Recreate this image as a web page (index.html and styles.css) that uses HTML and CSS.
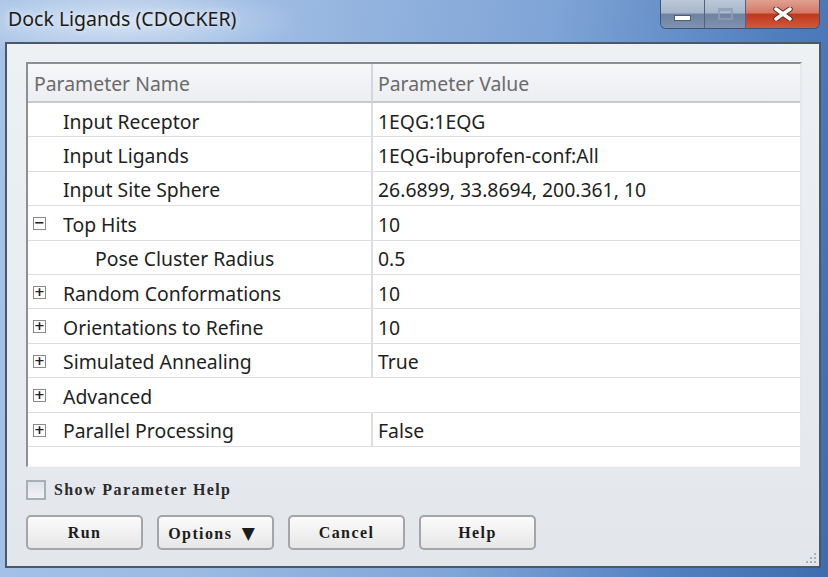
FILE: index.html
```html
<!DOCTYPE html>
<html lang="en">
  <head>
    <meta charset="UTF-8" />
    <title>Dock Ligands (CDOCKER)</title>
    <link rel="stylesheet" href="styles.css">
  </head>
  <body>
    <div class="window">
      <div class="titlebar">
        <div class="title">Dock Ligands (CDOCKER)</div>
        <div class="caption-buttons">
          <div class="cap-btn cap-min"><span class="min-bar"></span></div>
          <div class="cap-btn cap-max"><span class="max-box"></span></div>
          <div class="cap-btn cap-close">
            <svg width="20" height="14" viewBox="0 0 20 14">
              <path d="M3 2 L17 12 M17 2 L3 12" stroke="#5a2a22" stroke-width="5.5" stroke-linecap="round" />
              <path d="M3 2 L17 12 M17 2 L3 12" stroke="#fff" stroke-width="3.5" stroke-linecap="round" />
            </svg>
          </div>
        </div>
      </div>

      <div class="client">
        <div class="grid">
          <div class="head">Parameter Name</div>
          <div class="head head-value">Parameter Value</div>

          <div class="cell name">Input Receptor</div>
          <div class="cell value">1EQG:1EQG</div>

          <div class="cell name">Input Ligands</div>
          <div class="cell value">1EQG-ibuprofen-conf:All</div>

          <div class="cell name">Input Site Sphere</div>
          <div class="cell value">26.6899, 33.8694, 200.361, 10</div>

          <div class="cell name"><span class="toggle">&minus;</span>Top Hits</div>
          <div class="cell value">10</div>

          <div class="cell name child">Pose Cluster Radius</div>
          <div class="cell value">0.5</div>

          <div class="cell name"><span class="toggle">+</span>Random Conformations</div>
          <div class="cell value">10</div>

          <div class="cell name"><span class="toggle">+</span>Orientations to Refine</div>
          <div class="cell value">10</div>

          <div class="cell name"><span class="toggle">+</span>Simulated Annealing</div>
          <div class="cell value">True</div>

          <div class="cell name"><span class="toggle">+</span>Advanced</div>
          <div class="cell value group"></div>

          <div class="cell name"><span class="toggle">+</span>Parallel Processing</div>
          <div class="cell value">False</div>
        </div>

        <label class="help-check">
          <span class="checkbox"></span>
          Show Parameter Help
        </label>

        <div class="buttons">
          <button class="btn">Run</button>
          <button class="btn btn-options">Options <span class="arrow">&#9660;</span></button>
          <button class="btn">Cancel</button>
          <button class="btn">Help</button>
        </div>

        <svg class="grip" width="14" height="14" viewBox="0 0 14 14">
          <rect x="10" y="2" width="2" height="2" fill="#a8b0ba" />
          <rect x="6" y="6" width="2" height="2" fill="#a8b0ba" />
          <rect x="10" y="6" width="2" height="2" fill="#a8b0ba" />
          <rect x="2" y="10" width="2" height="2" fill="#a8b0ba" />
          <rect x="6" y="10" width="2" height="2" fill="#a8b0ba" />
          <rect x="10" y="10" width="2" height="2" fill="#a8b0ba" />
        </svg>
      </div>
    </div>
  </body>
</html>
```

FILE: styles.css
```css
body {
  margin: 0;
  padding: 0;
  width: 828px;
  height: 577px;
  overflow: hidden;
  font-family: "Noto Sans", "Open Sans", sans-serif;
}

.window {
  width: 828px;
  height: 577px;
  box-sizing: border-box;
  display: flex;
  flex-direction: column;
  padding: 0 7px 9px 5px;
  background:
    radial-gradient(ellipse 180px 40px at 120px 22px, rgba(255, 255, 255, 0.55), rgba(255, 255, 255, 0) 100%),
    linear-gradient(100deg, #a6c2e6 0%, #9dbbe3 30%, #7fa4d6 60%, #4f7dbd 85%, #3f6cae 100%);
}

.titlebar {
  height: 42px;
  display: flex;
  justify-content: space-between;
  align-items: flex-start;
}

.title {
  padding: 5px 0 0 3px;
  font-size: 19.5px;
  color: #1b1b1b;
  text-shadow: 0 0 6px rgba(255, 255, 255, 0.9);
}

/* 最小化・最大化・閉じる */
.caption-buttons {
  display: flex;
  height: 28px;
  border: 1px solid #3c5577;
  border-top: none;
  border-radius: 0 0 6px 6px;
  overflow: hidden;
  margin-right: 1px;
}

.cap-btn {
  height: 28px;
  display: flex;
  align-items: center;
  justify-content: center;
}

.cap-min,
.cap-max {
  width: 43px;
  background: linear-gradient(#bcc8d8 0%, #a9b7ca 45%, #6f82a0 52%, #7f93b1 100%);
  border-right: 1px solid #4d6384;
}

.cap-max {
  width: 40px;
}

.min-bar {
  width: 15px;
  height: 4px;
  margin-top: 8px;
  background: #fff;
  border: 1px solid #4f5d72;
}

.max-box {
  width: 11px;
  height: 7px;
  border: 2px solid #8d9db4;
  border-top-width: 3px;
  opacity: 0.8;
}

.cap-close {
  width: 73px;
  background: linear-gradient(#e0a090 0%, #d37a66 45%, #c0381d 52%, #cf5a3c 100%);
}

.client {
  position: relative;
  flex: 1;
  border: 2px solid #4a5868;
  background: linear-gradient(#eef1f4 0%, #e3e7ec 100%);
  padding: 18px 17px 0 19px;
}

.grid {
  display: grid;
  grid-template-columns: 343px 1fr;
  grid-template-rows: 39px repeat(10, 34.4px);
  align-content: start;
  height: 402px;
  background: #fff;
  border-top: 2px solid #8c8f93;
  border-left: 2px solid #8c8f93;
  border-right: 2px solid #e6e8eb;
  border-bottom: 1px solid #f4f5f7;
  font-size: 19.4px;
  color: #1f1f1f;
}

.head {
  display: flex;
  align-items: center;
  padding: 2px 0 0 6px;
  background: linear-gradient(#f6f7f9, #eceef2);
  color: #6b6b6b;
  border-bottom: 2px solid #c6c9cd;
}

.head-value {
  border-left: 2px solid #d3d6da;
  padding-left: 5px;
}

.cell {
  display: flex;
  align-items: center;
  padding-top: 3px;
  border-bottom: 1px solid #dcdee1;
  white-space: nowrap;
}

.name {
  padding-left: 35px;
  position: relative;
}

.name.child {
  padding-left: 67px;
}

.value {
  border-left: 2px solid #dcdee1;
  padding-left: 5px;
}

.value.group {
  border-left-color: transparent;
}

.toggle {
  position: absolute;
  left: 5px;
  top: 11px;
  width: 11px;
  height: 11px;
  border: 1px solid #8a8a8a;
  font-size: 13px;
  line-height: 10px;
  text-align: center;
  font-family: "DejaVu Sans", sans-serif;
  font-weight: bold;
  color: #222;
}

.help-check {
  display: flex;
  align-items: center;
  gap: 8px;
  margin-top: 13px;
  font-family: "Liberation Serif", serif;
  font-size: 16px;
  font-weight: bold;
  letter-spacing: 1.4px;
  color: #2b2b2b;
}

.checkbox {
  width: 16px;
  height: 16px;
  border: 2px solid #a9afb6;
  background: linear-gradient(#dfe2e6, #f2f3f5);
}

.buttons {
  display: flex;
  gap: 14px;
  margin-top: 15px;
}

.btn {
  width: 117px;
  height: 35px;
  border: 2px solid #a2a6ab;
  border-radius: 5px;
  background: linear-gradient(#fbfbfb 0%, #f1f1f1 50%, #e6e6e6 100%);
  font-family: "Liberation Serif", serif;
  font-size: 16px;
  font-weight: bold;
  letter-spacing: 1.4px;
  color: #1c1c1c;
  padding: 0;
}

.btn-options {
  padding-right: 8px;
}

.arrow {
  font-family: "DejaVu Sans", sans-serif;
  font-size: 17px;
  margin-left: 4px;
  letter-spacing: 0;
}

.grip {
  position: absolute;
  right: 1px;
  bottom: 1px;
}
```
